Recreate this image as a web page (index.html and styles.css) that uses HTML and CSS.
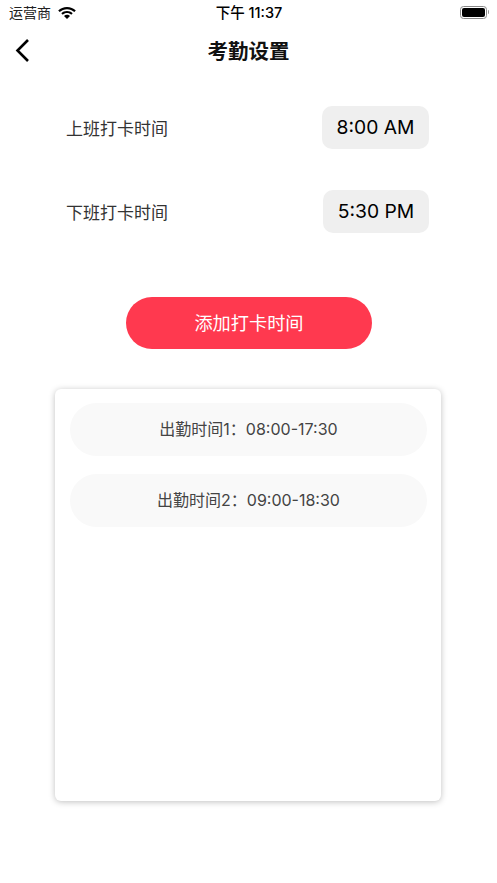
FILE: index.html
```html
<!DOCTYPE html>
<html>
    <head>
        <meta charset="utf-8">
        <title>考勤设置</title>
        <link rel="stylesheet" href="styles.css">
    </head>
    <body>
        <div class="statusbar">
            <div class="status-left">
                <span class="carrier">运营商</span>
                <svg class="wifi" width="18" height="12" viewBox="0 0 18 12">
                    <path d="M9 0C5.600 0 2.500 1.300 .2 3.500l1.500 1.600C3.600 3.300 6.200 2.200 9 2.200s5.400 1.100 7.300 2.900l1.500-1.600C15.500 1.300 12.400 0 9 0z"/>
                    <path d="M9 3.900c-2.200 0-4.200.9-5.700 2.300l1.500 1.600C5.900 6.800 7.400 6.100 9 6.100s3.100.7 4.200 1.700l1.500-1.600C13.200 4.800 11.200 3.900 9 3.900z"/>
                    <path d="M9 7.800c-1.200 0-2.200.5-3 1.200l3 3 3-3c-.8-.7-1.800-1.200-3-1.200z"/>
                </svg>
            </div>
            <div class="clock">下午 11:37</div>
            <div class="battery"><div class="battery-body"><div class="battery-fill"></div></div><div class="battery-cap"></div></div>
        </div>

        <div class="navbar">
            <svg class="back" width="16" height="25" viewBox="0 0 16 25">
                <path d="M14 2 L3.500 12.500 L14 23" fill="none" stroke="#000" stroke-width="2.600"/>
            </svg>
            <div class="title">考勤设置</div>
        </div>

        <div class="rows">
            <div class="row">
                <span class="row-label">上班打卡时间</span>
                <span class="time-chip am">8:00 AM</span>
            </div>
            <div class="row">
                <span class="row-label">下班打卡时间</span>
                <span class="time-chip pm">5:30 PM</span>
            </div>
        </div>

        <div class="add-btn">添加打卡时间</div>

        <div class="card">
            <div class="pill">出勤时间1：08:00-17:30</div>
            <div class="pill">出勤时间2：09:00-18:30</div>
        </div>
    </body>
</html>
```

FILE: styles.css
```css
html, body {
    margin: 0;
    padding: 0;
}
body {
    width: 497px;
    height: 883px;
    background: #fff;
    overflow: hidden;
    font-family: Inter, "Noto Sans CJK SC", sans-serif;
    color: #000;
}

.statusbar {
    height: 23px;
    display: grid;
    grid-template-columns: 1fr auto 1fr;
    align-items: center;
    padding: 0 8px 0 9px;
}
.status-left {
    display: flex;
    align-items: center;
    gap: 7px;
}
.carrier {
    font-size: 14px;
    color: #222;
}
.wifi {
    margin-top: 3px;
}
.clock {
    font-size: 14.500px;
    font-weight: 500;
}
.battery {
    justify-self: end;
    display: flex;
    align-items: center;
    margin-top: 1px;
}
.battery-body {
    border: 1px solid #888;
    border-radius: 3.500px;
    padding: 1px;
    width: 23px;
    height: 9px;
}
.battery-fill {
    height: 100%;
    background: #000;
    border-radius: 2px;
}
.battery-cap {
    width: 1.500px;
    height: 4px;
    margin-left: 1px;
    background: #999;
    border-radius: 0 1px 1px 0;
}

.navbar {
    height: 49px;
    margin-top: 2px;
    display: flex;
    align-items: center;
    justify-content: center;
    position: relative;
}
.back {
    position: absolute;
    left: 14px;
    top: 13px;
}
.title {
    font-size: 20.500px;
    font-weight: 600;
    color: #111;
}

.rows {
    margin-top: 32px;
    padding: 0 68px 0 66px;
    display: flex;
    flex-direction: column;
    gap: 41px;
}
.row {
    display: flex;
    align-items: center;
    justify-content: space-between;
}
.row-label {
    font-size: 17px;
    color: #333;
}
.time-chip {
    height: 43px;
    line-height: 43px;
    text-align: center;
    background: #efefef;
    border-radius: 10px;
    font-size: 19.300px;
}
.time-chip.am {
    width: 107px;
}
.time-chip.pm {
    width: 106px;
}

.add-btn {
    width: 246px;
    height: 52px;
    line-height: 52px;
    margin: 64px 0 0 126px;
    text-align: center;
    background: #ff394f;
    border-radius: 26px;
    font-size: 18.200px;
    color: #fff;
}

.card {
    width: 386px;
    height: 412px;
    margin: 40px 0 0 55px;
    padding: 14px 14px 0 15px;
    box-sizing: border-box;
    background: #fff;
    border-radius: 6px;
    box-shadow: 0 1px 6px rgba(0, 0, 0, .25);
    display: flex;
    flex-direction: column;
    gap: 18px;
}
.pill {
    height: 53px;
    line-height: 53px;
    text-align: center;
    background: #f9f9f9;
    border-radius: 27px;
    font-size: 16px;
    color: #444;
}
```
